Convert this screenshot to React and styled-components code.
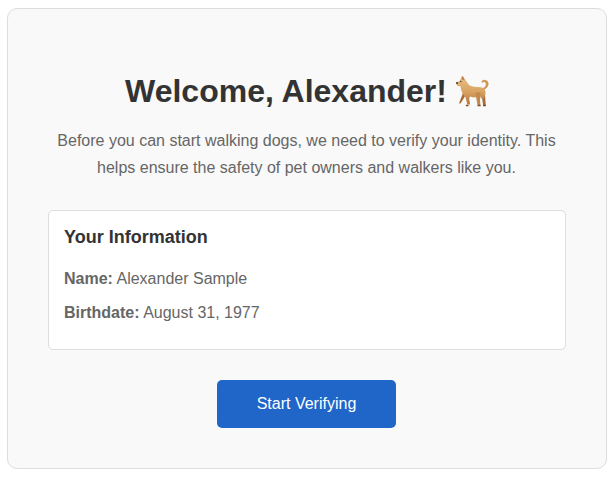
import React from 'react';
import styled, { createGlobalStyle } from 'styled-components';

const GlobalStyle = createGlobalStyle`
  body {
    margin: 0;
    background: #fff;
    font-family: "Liberation Sans", Arial, sans-serif;
  }
`;

const Page = styled.div`
  padding: 8px 7px;
`;

const Card = styled.div`
  box-sizing: border-box;
  width: 600px;
  height: 461px;
  padding: 60px 40px 40px;
  background: #f9f9f9;
  border: 1px solid #ddd;
  border-radius: 10px;
  display: flex;
  flex-direction: column;
  align-items: center;
`;

const Title = styled.h1`
  margin: 0 0 14px;
  display: flex;
  align-items: center;
  gap: 9px;
  font-size: 32px;
  line-height: 44px;
  font-weight: 700;
  color: #333;
`;

const Intro = styled.p`
  margin: 0 1px 29px 0;
  font-size: 16px;
  line-height: 27px;
  color: #666;
  text-align: center;
`;

const InfoBox = styled.section`
  box-sizing: border-box;
  width: 100%;
  height: 140px;
  padding: 15px;
  background: #fff;
  border: 1px solid #ddd;
  border-radius: 5px;
`;

const InfoTitle = styled.h3`
  margin: 0 0 22px;
  font-size: 18px;
  line-height: 22px;
  font-weight: 700;
  color: #333;
`;

const InfoRow = styled.p`
  margin: 0 0 16px;
  font-size: 16px;
  line-height: 18px;
  color: #666;
`;

const VerifyButton = styled.button`
  margin: 30px 1px 0 0;
  width: 179px;
  height: 48px;
  border: 0;
  border-radius: 5px;
  background: #2066c8;
  color: #fff;
  font-family: inherit;
  font-size: 16px;
`;

// drawn by hand, no emoji font in the sandbox
const DogEmoji = () => (
  <svg width="33" height="32" viewBox="0 0 33 32" aria-label="dog">
    <defs>
      <linearGradient id="fur" x1="0" y1="0" x2="0" y2="1">
        <stop offset="0" stopColor="#e9c088" />
        <stop offset="0.55" stopColor="#d9a362" />
        <stop offset="1" stopColor="#b27639" />
      </linearGradient>
    </defs>
    {/* far legs */}
    <path d="M7 18l3 1-2 4-3.500 5.500H3l1.500-4zM26 20h3l.8 11h-2.600l-.7-5z" fill="#a66c34" />
    {/* tail */}
    <path
      d="M25 13.500c3-.3 5.200-2 4.800-4.800-.2-1.700-2-2.200-3-1.200-.5.600-1.500.1-1.200-.9.800-2.600 5.600-2.800 6.700.7 1.100 3.800-2 7.400-6.500 8z"
      fill="#cf9857"
    />
    {/* body and head */}
    <path
      d="M6 1.200c.800-.500 1.500.300 1.700 1.300L9 4.300c1.500 1.800 2.500 4.300 4.500 5.900 3 1.500 7 1.800 11 2 3.200.200 5.200 2.500 5 6-.100 2.200-1 3.500-1.500 5l-2.300.800-1.500-2.500c-.500.500-1.500.800-3 .800-3 .200-5 0-7-.800l-1 1.500.800 6.500h-2.600l-2-7.500c-1.800-1.500-3.200-3.500-4-6.500-.5-2-.800-3.300-.900-4.300-1.300.200-2.800-.300-3.800-1L.500 9c-.300-.800-.100-1.500.500-1.800l3-1.800c.500-1.500 1.200-3.200 2-4.200z"
      fill="url(#fur)"
    />
    {/* near hind leg */}
    <path d="M19.500 18c1-1 3.500-1.200 5 0l-.500 7 .5 6h-2.800l-1.200-6.500z" fill="#c48a4b" />
    {/* ear, eye, nose */}
    <path d="M6.200 1.500c.700-.300 1.200.500 1.300 1.300l1 2.200-2.800-.600z" fill="#b47c42" />
    <circle cx="4.800" cy="6.500" r=".7" fill="#33241a" />
    <circle cx="1" cy="8" r=".9" fill="#33241a" />
    {/* paws */}
    <path d="M10 29.800h2.400l.2 1.400H9.800zM21.600 29.800h2.800l.2 1.400h-3zM27.100 29.800h2.600l.1 1.400h-2.800z" fill="#7d4f26" />
  </svg>
);

export default function App() {
  return (
    <Page>
      <GlobalStyle />
      <Card>
        <Title>
          Welcome, Alexander! <DogEmoji />
        </Title>
        <Intro>
          Before you can start walking dogs, we need to verify your identity. This helps ensure the safety of pet owners and walkers like you.
        </Intro>
        <InfoBox>
          <InfoTitle>Your Information</InfoTitle>
          <InfoRow><strong>Name:</strong> Alexander Sample</InfoRow>
          <InfoRow><strong>Birthdate:</strong> August 31, 1977</InfoRow>
        </InfoBox>
        <VerifyButton>Start Verifying</VerifyButton>
      </Card>
    </Page>
  );
}
